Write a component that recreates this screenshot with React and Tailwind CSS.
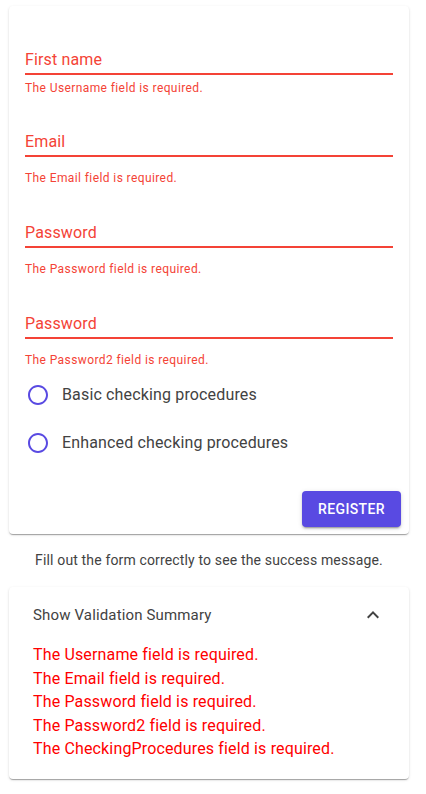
const FIELDS = [
  { label: 'First name', error: 'The Username field is required.', top: 'mt-0', gap: 'mt-[6px]' },
  { label: 'Email', error: 'The Email field is required.', top: 'mt-[37px]', gap: 'mt-[14px]' },
  { label: 'Password', error: 'The Password field is required.', top: 'mt-[38px]', gap: 'mt-[14px]' },
  { label: 'Password', error: 'The Password2 field is required.', top: 'mt-[38px]', gap: 'mt-[14px]' },
]

const SUMMARY = [
  'The Username field is required.',
  'The Email field is required.',
  'The Password field is required.',
  'The Password2 field is required.',
  'The CheckingProcedures field is required.',
]

const cardShadow = 'shadow-[0_2px_1px_-1px_rgba(0,0,0,0.2),0_1px_1px_0_rgba(0,0,0,0.14),0_1px_3px_0_rgba(0,0,0,0.12)]'

const Field = ({ label, error, top, gap }) => (
  <div className={top}>
    <div className="text-[16px] leading-[19px] tracking-[0.15px] text-[#f44336]">{label}</div>
    <div className="mt-[4px] h-[2px] bg-[#f44336]" />
    <div className={`${gap} text-[12px] leading-[14px] tracking-[0.4px] text-[#f44336]`}>{error}</div>
  </div>
)

const Radio = ({ label }) => (
  <label className="flex h-12 items-center">
    <span className="ml-[1px] flex h-6 w-6 items-center justify-center">
      <svg width="24" height="24" viewBox="0 0 24 24" fill="#594ae2">
        <path d="M12 2C6.48 2 2 6.48 2 12s4.48 10 10 10 10-4.48 10-10S17.52 2 12 2zm0 18c-4.42 0-8-3.58-8-8s3.58-8 8-8 8 3.58 8 8-3.58 8-8 8z" />
      </svg>
    </span>
    <span className="ml-3 text-[16px] tracking-[0.15px] text-[#424242]">{label}</span>
  </label>
)

export default function App() {
  return (
    <div className="min-h-screen bg-white pt-[6px] font-['Roboto',sans-serif]">
      {/* Register form */}
      <div className={`mx-[9px] w-[400px] rounded bg-white px-4 pt-[44px] pb-[7px] ${cardShadow}`}>
        {FIELDS.map((f, i) => (
          <Field key={i} {...f} />
        ))}

        <div className="mt-[4px]">
          <Radio label="Basic checking procedures" />
          <Radio label="Enhanced checking procedures" />
        </div>

        <div className="-mr-2 mt-[24px] flex justify-end">
          <button className="h-9 w-[99px] rounded bg-[#594ae2] text-[14px] font-medium tracking-[0.4px] text-white shadow-[0_3px_1px_-2px_rgba(0,0,0,0.2),0_2px_2px_0_rgba(0,0,0,0.14),0_1px_5px_0_rgba(0,0,0,0.12)]">
            REGISTER
          </button>
        </div>
      </div>

      <p className="mt-4 w-[418px] text-center text-[14px] leading-5 tracking-[0.15px] text-[#424242]">
        Fill out the form correctly to see the success message.
      </p>

      {/* Validation summary */}
      <div className={`mx-[9px] mt-[17px] w-[400px] rounded bg-white pb-[18px] ${cardShadow}`}>
        <div className="flex h-14 items-center justify-between px-6">
          <span className="text-[15px] tracking-[0.15px] text-[#424242]">Show Validation Summary</span>
          <svg width="24" height="24" viewBox="0 0 24 24" fill="#424242">
            <path d="M12 8l-6 6 1.41 1.41L12 10.83l4.59 4.58L18 14z" />
          </svg>
        </div>
        <div className="px-6 text-[16px] leading-[23.5px] tracking-[0.15px] text-[#ff0000]">
          {SUMMARY.map((s) => (
            <div key={s}>{s}</div>
          ))}
        </div>
      </div>
    </div>
  )
}
